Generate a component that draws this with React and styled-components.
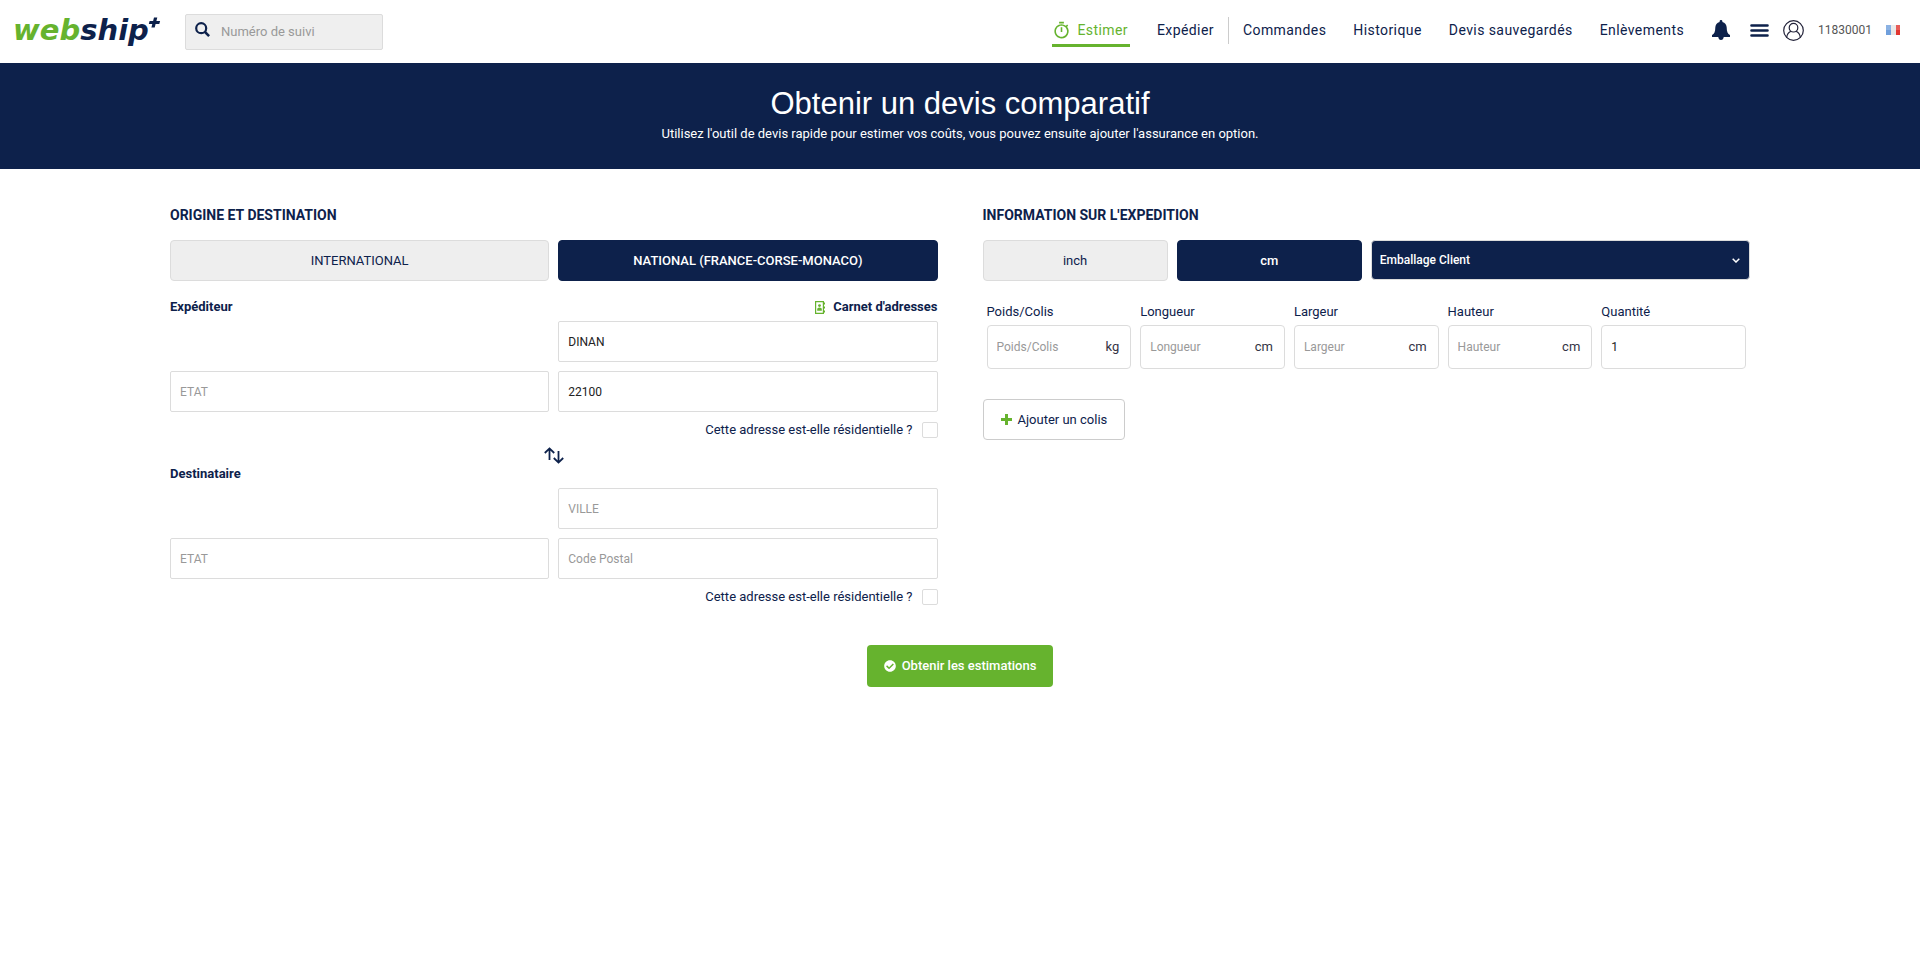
import React from "react";
import styled, { createGlobalStyle } from "styled-components";
import { FaCheckCircle } from "react-icons/fa";
import { MdOutlineTimer } from "react-icons/md";

const NAVY = "#0d214b";
const GREEN = "#66b32e";
const BORDER = "#dcdcdc";

const GlobalStyle = createGlobalStyle`
  * {
    box-sizing: border-box;
  }

  body {
    margin: 0;
    background: #ffffff;
    color: ${NAVY};
    font-family: Roboto, "Liberation Sans", sans-serif;
    font-size: 13px;
    line-height: 20px;
  }

  button,
  input,
  select {
    font: inherit;
    color: inherit;
  }

  svg {
    display: block;
    flex-shrink: 0;
  }
`;

const Header = styled.header`
  display: flex;
  align-items: center;
  justify-content: space-between;
  height: 63px;
  padding: 0 20px 0 13px;
`;

const HeaderGroup = styled.div`
  display: flex;
  align-items: center;
`;

const HeaderMenu = styled(HeaderGroup)`
  padding-bottom: 3px;
`;

const Logo = styled.a`
  display: flex;
  margin-right: 20px;
`;

const SearchBox = styled.label`
  display: flex;
  align-items: center;
  gap: 11px;
  width: 198px;
  height: 36px;
  padding: 0 9px;
  border: 1px solid ${BORDER};
  border-radius: 2px;
  background: #efefef;

  svg {
    margin-bottom: 4px;
  }

  input {
    flex: 1;
    min-width: 0;
    padding: 0;
    border: 0;
    outline: 0;
    background: transparent;

    &::placeholder {
      color: #999999;
      opacity: 1;
    }
  }
`;

const Nav = styled.nav`
  display: flex;
  align-items: center;
  gap: 27px;
  margin-right: 28px;
`;

const NavLink = styled.a`
  display: flex;
  align-items: center;
  gap: 6px;
  height: 34px;
  padding-right: ${({ $active }) => ($active ? "2px" : "0")};
  border-top: 3px solid transparent;
  border-bottom: 3px solid ${({ $active }) => ($active ? GREEN : "transparent")};
  color: ${({ $active }) => ($active ? GREEN : NAVY)};
  font-size: 14px;
  letter-spacing: 0.03em;
  text-decoration: none;
  white-space: nowrap;
`;

const NavDivider = styled.span`
  width: 1px;
  height: 27px;
  margin: 0 -13px;
  background: #cccccc;
`;

const HeaderIcons = styled.div`
  display: flex;
  align-items: center;
  gap: 14px;
`;

const IconButton = styled.button`
  display: flex;
  padding: 0;
  border: 0;
  background: none;
  cursor: pointer;
`;

const BellButton = styled(IconButton)`
  margin-right: 6px;
`;

const Account = styled.span`
  color: #555555;
  font-size: 12px;
`;

const Banner = styled.section`
  display: flex;
  flex-direction: column;
  align-items: center;
  height: 106px;
  padding-top: 20px;
  background: ${NAVY};
  color: #ffffff;
  text-align: center;

  h1 {
    margin: 0;
    font-family: "Liberation Sans", Arial, sans-serif;
    font-size: 31px;
    font-weight: 400;
    line-height: 41px;
  }

  p {
    margin: 0;
  }
`;

const Form = styled.form`
  padding: 36px 170px 0;
`;

const Columns = styled.div`
  display: grid;
  grid-template-columns: repeat(2, minmax(0, 1fr));
  gap: 45px;
`;

const SectionTitle = styled.h2`
  margin: 0 0 15px;
  font-size: 14px;
  font-weight: 700;
  line-height: 20px;
`;

const Pair = styled.div`
  display: grid;
  grid-template-columns: repeat(2, minmax(0, 1fr));
  gap: 9px;
`;

const TogglePair = styled(Pair)`
  margin-bottom: 16px;
`;

const Toggle = styled.button`
  flex: 1;
  height: 41px;
  border: 1px solid ${({ $active }) => ($active ? NAVY : BORDER)};
  border-radius: 4px;
  background: ${({ $active }) => ($active ? NAVY : "#eeeeee")};
  color: ${({ $active }) => ($active ? "#ffffff" : NAVY)};
  font-weight: ${({ $active }) => ($active ? 500 : 400)};
  cursor: pointer;
`;

const AddressHead = styled.div`
  display: flex;
  align-items: center;
  justify-content: space-between;
  margin-bottom: 4px;

  h3 {
    margin: 0;
    font-size: 13px;
    font-weight: 700;
  }
`;

const BookLink = styled.a`
  display: flex;
  align-items: center;
  gap: 8px;
  color: ${NAVY};
  font-weight: 700;
  text-decoration: none;
`;

const TextField = styled.input`
  width: 100%;
  height: 41px;
  padding: 0 9px;
  border: 1px solid ${BORDER};
  border-radius: 2px;
  color: #222222;
  font-size: 12px;

  &::placeholder {
    color: #999999;
    opacity: 1;
  }
`;

const Residential = styled.label`
  display: flex;
  align-items: center;
  justify-content: flex-end;
  gap: 9px;
  height: 16px;
  margin-top: 10px;

  input {
    appearance: none;
    width: 16px;
    height: 16px;
    margin: 0;
    border: 1px solid ${BORDER};
    border-radius: 2px;
    background: #ffffff;

    &:checked {
      background: ${GREEN};
    }
  }
`;

const SwapRow = styled.div`
  display: flex;
  justify-content: center;
  align-items: flex-end;
  height: 26px;
`;

const Units = styled.div`
  display: flex;
  gap: 9px;
`;

const PackagingSelect = styled.div`
  display: grid;
  align-items: center;
  align-self: start;
  color: #ffffff;

  select,
  svg {
    grid-area: 1 / 1;
  }

  select {
    appearance: none;
    width: 100%;
    height: 40px;
    padding: 0 8px;
    border: 1px solid ${BORDER};
    border-radius: 4px;
    background: ${NAVY};
    font-size: 12px;
    font-weight: 500;
  }

  svg {
    justify-self: end;
    margin-right: 10px;
    pointer-events: none;
  }
`;

const Parcel = styled.div`
  display: grid;
  grid-template-columns: repeat(5, minmax(0, 1fr));
  gap: 9px;
  margin: 21px 4px 30px;
`;

const Measure = styled.label`
  display: block;
`;

const MeasureBox = styled.span`
  display: flex;
  align-items: center;
  height: 44px;
  margin-top: 3px;
  padding: 0 11px 0 9px;
  border: 1px solid ${BORDER};
  border-radius: 4px;
  color: #333344;

  input {
    flex: 1;
    min-width: 0;
    padding: 0;
    border: 0;
    outline: 0;
    color: #222222;
    font-size: 12px;

    &::placeholder {
      color: #999999;
      opacity: 1;
    }
  }
`;

const AddButton = styled.button`
  display: inline-flex;
  align-items: center;
  gap: 6px;
  height: 41px;
  padding: 0 17px;
  border: 1px solid #cccccc;
  border-radius: 4px;
  background: #ffffff;
  cursor: pointer;
`;

const SubmitRow = styled.div`
  display: flex;
  justify-content: center;
  margin-top: 40px;
`;

const SubmitButton = styled.button`
  display: flex;
  align-items: center;
  gap: 6px;
  height: 42px;
  padding: 0 17px;
  border: 0;
  border-radius: 4px;
  background: ${GREEN};
  color: #ffffff;
  font-weight: 500;
  cursor: pointer;
`;

const LogoMark = () => (
  <svg width="152" height="44" viewBox="0 0 152 44" role="img" aria-label="webship+">
    <text
      x="0"
      y="30"
      fontFamily="'DejaVu Sans', sans-serif"
      fontSize="29"
      fontWeight="700"
      fontStyle="italic"
      fill={NAVY}
    >
      <tspan fill={GREEN}>web</tspan>ship
    </text>
    <path
      d="M141 7.500h3.300l-.9 3.400h3.700l-.8 3.200h-3.700l-.9 3.400h-3.300l.9-3.400h-3.500l.8-3.200h3.500z"
      fill={NAVY}
    />
  </svg>
);

const SearchIcon = () => (
  <svg width="15" height="15" viewBox="0 0 15 15" fill="none" stroke={NAVY}>
    <circle cx="6.200" cy="6.200" r="5" strokeWidth="2.200" />
    <path d="M9.900 9.900l4.200 4.200" strokeWidth="2.600" />
  </svg>
);

const BellIcon = () => (
  <svg width="18" height="20" viewBox="0 0 18 20" fill={NAVY}>
    <path d="M9 0c.8 0 1.400.6 1.400 1.400v.5c2.600.6 4.300 2.800 4.300 5.600 0 4.300 1 6.300 3.300 7.500v2H0v-2c2.300-1.200 3.300-3.200 3.300-7.500C3.300 4.700 5 2.500 7.600 1.900v-.5C7.600.6 8.200 0 9 0zM6.200 16.500h5.600C11.600 19 10.500 20 9 20s-2.600-1-2.800-3.500z" />
  </svg>
);

const MenuIcon = () => (
  <svg width="19" height="13" viewBox="0 0 19 13" stroke={NAVY} strokeWidth="2.600" strokeLinecap="round">
    <path d="M1.500 1.500h16M1.500 6.500h16M1.500 11.500h16" />
  </svg>
);

const UserIcon = () => (
  <svg width="21" height="21" viewBox="0 0 21 21" fill="none" stroke="#23233a" strokeWidth="1.200">
    <circle cx="10.500" cy="10.500" r="9.800" />
    <circle cx="10.500" cy="7.700" r="4.300" />
    <path d="M3.700 17.500c.3-3.200 2-5.200 4.300-6.200M17.300 17.500c-.3-3.200-2-5.200-4.300-6.200" />
  </svg>
);

const FlagIcon = () => (
  <svg width="14" height="10" viewBox="0 0 14 10" role="img" aria-label="Français">
    <path d="M0 0h5v10H0z" fill="#6f9fdc" />
    <path d="M5 0h5v10H5z" fill="#e6e6e6" />
    <path d="M10 0h4v10h-4z" fill="#e2352f" />
    <path d="M0 0h14v5H0z" fill="#ffffff" opacity="0.200" />
  </svg>
);

const BookIcon = () => (
  <svg width="10" height="13" viewBox="0 0 10 13" fill={GREEN}>
    <path d="M.6.600h7.800v11.800H.6z" fill="none" stroke={GREEN} strokeWidth="1.200" />
    <circle cx="4.500" cy="4.600" r="1.400" />
    <path d="M2.200 9.700V8.400c0-1.200 1-1.900 2.300-1.900s2.300.7 2.300 1.900v1.300z" />
    <path d="M9 1.500h1v2H9zM9 5.500h1v2H9zM9 9.500h1v2H9z" />
  </svg>
);

const SwapIcon = () => (
  <svg width="20" height="17" viewBox="0 0 20 17" fill="none" stroke={NAVY} strokeWidth="1.800">
    <path d="M5.500 13V1.500M.8 6l4.700-4.600L10.200 6M14.500 4v11.500M9.800 11l4.700 4.600 4.700-4.600" />
  </svg>
);

const ChevronIcon = () => (
  <svg width="8" height="5" viewBox="0 0 8 5" fill="none" stroke="#ffffff" strokeWidth="1.500">
    <path d="M.7.700L4 4 7.300.700" />
  </svg>
);

const PlusIcon = () => (
  <svg width="11" height="11" viewBox="0 0 11 11" fill={GREEN}>
    <path d="M4 0h3v4h4v3H7v4H4V7H0V4h4z" />
  </svg>
);

const parcelFields = [
  { label: "Poids/Colis", unit: "kg" },
  { label: "Longueur", unit: "cm" },
  { label: "Largeur", unit: "cm" },
  { label: "Hauteur", unit: "cm" },
];

const AddressFields = ({ city, zip }) => (
  <>
    <Pair>
      <span />
      <TextField aria-label="Ville" placeholder="VILLE" defaultValue={city} />
      <TextField aria-label="Etat" placeholder="ETAT" />
      <TextField aria-label="Code Postal" placeholder="Code Postal" defaultValue={zip} />
    </Pair>
    <Residential>
      Cette adresse est-elle résidentielle ?
      <input type="checkbox" />
    </Residential>
  </>
);

const TopBar = () => (
  <Header>
    <HeaderGroup>
      <Logo href="#">
        <LogoMark />
      </Logo>
      <SearchBox>
        <SearchIcon />
        <input type="text" aria-label="Numéro de suivi" placeholder="Numéro de suivi" />
      </SearchBox>
    </HeaderGroup>
    <HeaderMenu>
      <Nav>
        <NavLink href="#" $active>
          <MdOutlineTimer size={19} />
          Estimer
        </NavLink>
        <NavLink href="#">Expédier</NavLink>
        <NavDivider />
        <NavLink href="#">Commandes</NavLink>
        <NavLink href="#">Historique</NavLink>
        <NavLink href="#">Devis sauvegardés</NavLink>
        <NavLink href="#">Enlèvements</NavLink>
      </Nav>
      <HeaderIcons>
        <BellButton type="button" aria-label="Notifications">
          <BellIcon />
        </BellButton>
        <IconButton type="button" aria-label="Menu">
          <MenuIcon />
        </IconButton>
        <IconButton type="button" aria-label="Compte">
          <UserIcon />
        </IconButton>
        <Account>11830001</Account>
        <FlagIcon />
      </HeaderIcons>
    </HeaderMenu>
  </Header>
);

const App = () => {
  return (
    <>
      <GlobalStyle />
      <TopBar />
      <Banner>
        <h1>Obtenir un devis comparatif</h1>
        <p>
          Utilisez l'outil de devis rapide pour estimer vos coûts, vous pouvez ensuite ajouter
          l'assurance en option.
        </p>
      </Banner>
      <Form onSubmit={(e) => e.preventDefault()}>
        <Columns>
          <section>
            <SectionTitle>ORIGINE ET DESTINATION</SectionTitle>
            <TogglePair>
              <Toggle type="button">INTERNATIONAL</Toggle>
              <Toggle type="button" $active>
                NATIONAL (FRANCE-CORSE-MONACO)
              </Toggle>
            </TogglePair>
            <AddressHead>
              <h3>Expéditeur</h3>
              <BookLink href="#">
                <BookIcon />
                Carnet d'adresses
              </BookLink>
            </AddressHead>
            <AddressFields city="DINAN" zip="22100" />
            <SwapRow>
              <IconButton type="button" aria-label="Inverser les adresses">
                <SwapIcon />
              </IconButton>
            </SwapRow>
            <AddressHead>
              <h3>Destinataire</h3>
            </AddressHead>
            <AddressFields />
          </section>
          <section>
            <SectionTitle>INFORMATION SUR L'EXPEDITION</SectionTitle>
            <Pair>
              <Units>
                <Toggle type="button">inch</Toggle>
                <Toggle type="button" $active>
                  cm
                </Toggle>
              </Units>
              <PackagingSelect>
                <select aria-label="Emballage">
                  <option>Emballage Client</option>
                </select>
                <ChevronIcon />
              </PackagingSelect>
            </Pair>
            <Parcel>
              {parcelFields.map(({ label, unit }) => (
                <Measure key={label}>
                  {label}
                  <MeasureBox>
                    <input type="text" placeholder={label} />
                    {unit}
                  </MeasureBox>
                </Measure>
              ))}
              <Measure>
                Quantité
                <MeasureBox>
                  <input type="text" defaultValue="1" />
                </MeasureBox>
              </Measure>
            </Parcel>
            <AddButton type="button">
              <PlusIcon />
              Ajouter un colis
            </AddButton>
          </section>
        </Columns>
        <SubmitRow>
          <SubmitButton type="submit">
            <FaCheckCircle size={12} />
            Obtenir les estimations
          </SubmitButton>
        </SubmitRow>
      </Form>
    </>
  );
};

export default App;
